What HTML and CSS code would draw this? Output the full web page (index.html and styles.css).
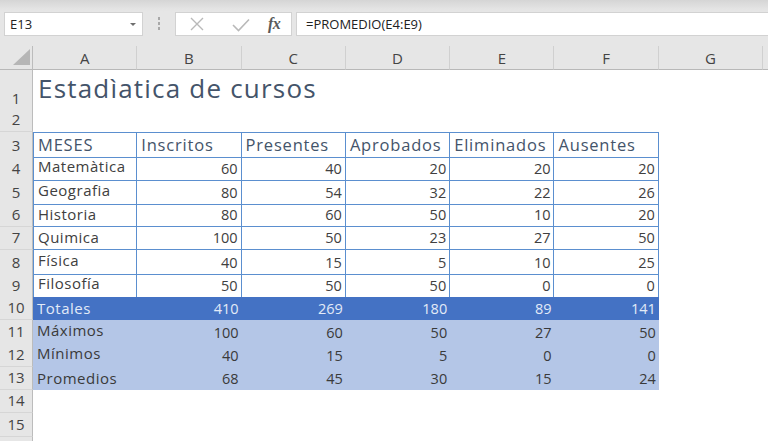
FILE: index.html
```html
<!DOCTYPE html>
<html lang="es">
<head>
<meta charset="utf-8">
<title>Estadìatica de cursos</title>
<link rel="stylesheet" href="styles.css">
</head>
<body>
<div class="topbar">
  <div class="namebox"><span class="nb-text">E13</span><span class="nb-arrow"></span></div>
  <div class="dots"><span></span><span></span><span></span></div>
  <div class="fbuttons">
    <svg class="ic-x" width="14" height="14" viewBox="0 0 14 14"><path d="M1 1 L13 13 M13 1 L1 13" stroke="#b9b9b9" stroke-width="1.4" fill="none"/></svg>
    <svg class="ic-ok" width="18" height="14" viewBox="0 0 18 14"><path d="M1 7 L6.5 12.5 L17 1.5" stroke="#b9b9b9" stroke-width="1.6" fill="none"/></svg>
    <span class="fx">fx</span>
  </div>
  <div class="formula">=PROMEDIO(E4:E9)</div>
</div>

<div class="sheet">
  <div class="row hdr">
    <div class="corner"><svg width="18" height="17" viewBox="0 0 18 17"><path d="M17 0 L17 16 L0 16 Z" fill="#b6b6b6"/></svg></div>
    <div class="ch">A</div><div class="ch">B</div><div class="ch">C</div><div class="ch">D</div><div class="ch">E</div><div class="ch">F</div><div class="ch">G</div><div class="ch last"></div>
  </div>

  <div class="row r1">
    <div class="rh">1</div>
    <div class="c title">Estadìatica de cursos</div><div class="c"></div><div class="c"></div><div class="c"></div><div class="c"></div><div class="c"></div><div class="c"></div><div class="c"></div>
  </div>

  <div class="row h23">
    <div class="rh">2</div>
    <div class="c"></div><div class="c"></div><div class="c"></div><div class="c"></div><div class="c"></div><div class="c"></div><div class="c"></div><div class="c"></div>
  </div>

  <div class="row h24">
    <div class="rh">3</div>
    <div class="c b bt bl th">MESES</div><div class="c b bt th">Inscritos</div><div class="c b bt th">Presentes</div><div class="c b bt th">Aprobados</div><div class="c b bt th">Eliminados</div><div class="c b bt th">Ausentes</div><div class="c"></div><div class="c"></div>
  </div>

  <div class="row h24">
    <div class="rh">4</div>
    <div class="c b bl lbl up">Matemàtica</div><div class="c b n">60</div><div class="c b n">40</div><div class="c b n">20</div><div class="c b n">20</div><div class="c b n">20</div><div class="c"></div><div class="c"></div>
  </div>

  <div class="row h23">
    <div class="rh">5</div>
    <div class="c b bl lbl up">Geografia</div><div class="c b n">80</div><div class="c b n">54</div><div class="c b n">32</div><div class="c b n">22</div><div class="c b n">26</div><div class="c"></div><div class="c"></div>
  </div>

  <div class="row h24">
    <div class="rh">6</div>
    <div class="c b bl lbl">Historia</div><div class="c b n">80</div><div class="c b n">60</div><div class="c b n">50</div><div class="c b n">10</div><div class="c b n">20</div><div class="c"></div><div class="c"></div>
  </div>

  <div class="row h23">
    <div class="rh">7</div>
    <div class="c b bl lbl">Quimica</div><div class="c b n">100</div><div class="c b n">50</div><div class="c b n">23</div><div class="c b n">27</div><div class="c b n">50</div><div class="c"></div><div class="c"></div>
  </div>

  <div class="row h23">
    <div class="rh">8</div>
    <div class="c b bl lbl up">Física</div><div class="c b n">40</div><div class="c b n">15</div><div class="c b n">5</div><div class="c b n">10</div><div class="c b n">25</div><div class="c"></div><div class="c"></div>
  </div>

  <div class="row h24">
    <div class="rh">9</div>
    <div class="c b bl lbl up">Filosofía</div><div class="c b n">50</div><div class="c b n">50</div><div class="c b n">50</div><div class="c b n">0</div><div class="c b n">0</div><div class="c"></div><div class="c"></div>
  </div>

  <div class="row h23">
    <div class="rh">10</div>
    <div class="c tot lbl">Totales</div><div class="c tot n">410</div><div class="c tot n">269</div><div class="c tot n">180</div><div class="c tot n">89</div><div class="c tot n">141</div><div class="c"></div><div class="c"></div>
  </div>

  <div class="row h23">
    <div class="rh">11</div>
    <div class="c sum lbl up">Máximos</div><div class="c sum n">100</div><div class="c sum n">60</div><div class="c sum n">50</div><div class="c sum n">27</div><div class="c sum n">50</div><div class="c"></div><div class="c"></div>
  </div>

  <div class="row h24">
    <div class="rh">12</div>
    <div class="c sum lbl up">Mínimos</div><div class="c sum n">40</div><div class="c sum n">15</div><div class="c sum n">5</div><div class="c sum n">0</div><div class="c sum n">0</div><div class="c"></div><div class="c"></div>
  </div>

  <div class="row h23">
    <div class="rh">13</div>
    <div class="c sum lbl">Promedios</div><div class="c sum n">68</div><div class="c sum n">45</div><div class="c sum n">30</div><div class="c sum n">15</div><div class="c sum n">24</div><div class="c"></div><div class="c"></div>
  </div>

  <div class="row h23">
    <div class="rh">14</div>
    <div class="c"></div><div class="c"></div><div class="c"></div><div class="c"></div><div class="c"></div><div class="c"></div><div class="c"></div><div class="c"></div>
  </div>

  <div class="row h24">
    <div class="rh">15</div>
    <div class="c"></div><div class="c"></div><div class="c"></div><div class="c"></div><div class="c"></div><div class="c"></div><div class="c"></div><div class="c"></div>
  </div>

  <div class="row h23">
    <div class="rh"></div>
    <div class="c"></div><div class="c"></div><div class="c"></div><div class="c"></div><div class="c"></div><div class="c"></div><div class="c"></div><div class="c"></div>
  </div>
</div>
</body>
</html>
```

FILE: styles.css
```css
html, body {
  margin: 0;
  padding: 0;
  background: #ffffff;
  overflow: hidden;
}
body {
  width: 768px;
  height: 441px;
  font-family: "Open Sans", "DejaVu Sans", sans-serif;
  color: #404040;
}

/* ---------- formula bar ---------- */
.topbar {
  height: 46px;
  box-sizing: border-box;
  padding-top: 12px;
  display: flex;
  align-items: flex-start;
  background: linear-gradient(#d5d5d5 0px, #e4e4e4 9px, #e6e6e6 12px);
  font-family: "Open Sans", "Noto Sans", sans-serif;
}
.namebox {
  margin-left: 4px;
  width: 139px;
  height: 24px;
  box-sizing: border-box;
  background: #fff;
  border: 1px solid #d2d2d2;
  display: flex;
  align-items: center;
  justify-content: space-between;
  padding: 0 6px 0 5px;
  font-size: 13px;
  color: #222;
}
.nb-arrow {
  width: 0;
  height: 0;
  border-left: 3px solid transparent;
  border-right: 3px solid transparent;
  border-top: 3px solid #6e6e6e;
  margin-top: 1px;
}
.dots {
  margin-left: 15px;
  margin-top: 5px;
  width: 3px;
  display: flex;
  flex-direction: column;
  gap: 2px;
}
.dots span {
  width: 2px;
  height: 3px;
  background: #a8a8a8;
}
.fbuttons {
  margin-left: 14px;
  width: 117px;
  height: 24px;
  box-sizing: border-box;
  background: #fff;
  border: 1px solid #d2d2d2;
  display: flex;
  align-items: center;
  padding-left: 14px;
}
.ic-x { margin-right: 28px; }
.ic-ok { margin-right: 18px; margin-top: 1px; }
.fx {
  font-family: "Liberation Serif", "DejaVu Serif", serif;
  font-style: italic;
  font-weight: bold;
  font-size: 16px;
  color: #5a5a5a;
  letter-spacing: -0.5px;
}
.formula {
  margin-left: 4px;
  flex: 1;
  height: 24px;
  box-sizing: border-box;
  background: #fff;
  border: 1px solid #d2d2d2;
  border-right: none;
  display: flex;
  align-items: center;
  padding-left: 9px;
  font-size: 13px;
  color: #222;
}

/* ---------- sheet ---------- */
.sheet {
  display: flex;
  flex-direction: column;
}
.row {
  display: grid;
  grid-template-columns: 33px repeat(7, 104.3px) 1fr;
  height: 23px;
}
.row.hdr { height: 24px; }
.row.r1 { height: 39px; }
.row.h23 { height: 23px; }
.row.h24 { height: 24px; }

.corner {
  background: #e6e6e6;
  border-right: 1px solid #bcbcbc;
  border-bottom: 1px solid #b8b8b8;
  display: flex;
  align-items: flex-end;
  justify-content: flex-end;
  padding: 0 1px 3px 0;
  box-sizing: border-box;
}
.ch {
  background: #e6e6e6;
  border-bottom: 1px solid #b8b8b8;
  border-right: 1px solid #d0d0d0;
  box-sizing: border-box;
  display: flex;
  align-items: center;
  justify-content: center;
  font-size: 15px;
  color: #444;
}
.ch.last { border-right: none; }

.rh {
  background: #e6e6e6;
  border-right: 1px solid #bcbcbc;
  border-bottom: 1px solid #d6d6d6;
  box-sizing: border-box;
  display: flex;
  align-items: flex-end;
  justify-content: center;
  padding-bottom: 2px;
  font-size: 15px;
  color: #444;
}

.c {
  box-sizing: border-box;
  display: flex;
  align-items: flex-end;
  padding: 0 3px 2px 4px;
  white-space: nowrap;
  overflow: visible;
  font-size: 14.5px;
  color: #404040;
  min-width: 0;
}
.c.title {
  font-size: 26px;
  color: #44546a;
  padding-left: 5px;
  padding-bottom: 5px;
  letter-spacing: 1.2px;
}
.c.b {
  border-right: 1px solid #5b8fcf;
  border-bottom: 1px solid #5b8fcf;
}
.c.bt { border-top: 1px solid #5b8fcf; }
.c.bl { border-left: 1px solid #5b8fcf; }
.c.th {
  font-size: 16.5px;
  color: #44546a;
  padding-bottom: 1px;
  letter-spacing: 0.8px;
}
.c.n { justify-content: flex-end; }
.c.lbl {
  padding-left: 4px;
  font-size: 15px;
  letter-spacing: 0.5px;
}
.c.up { padding-bottom: 4px; }

.c.tot {
  background: #4472c4;
  color: #e2eaf7;
}
.c.sum {
  background: #b4c6e7;
  color: #3a3a3a;
}
.row.h23 .c.sum, .row.h24 .c.sum { border-bottom: 0; }
```
